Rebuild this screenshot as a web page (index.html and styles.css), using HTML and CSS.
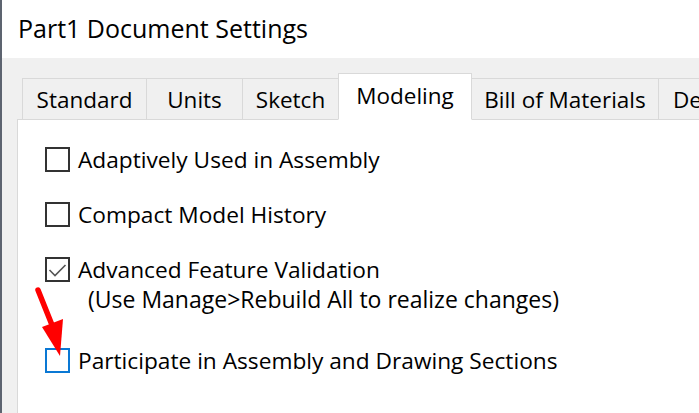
FILE: index.html
```html
<!DOCTYPE html>
<html>
<head>
<meta charset="utf-8">
<link rel="stylesheet" href="styles.css">
</head>
<body>
<div class="window">
  <div class="title">Part1 Document Settings</div>
  <div class="body">
    <div class="tabs">
      <div class="tab tab-standard">Standard</div>
      <div class="tab tab-units">Units</div>
      <div class="tab tab-sketch">Sketch</div>
      <div class="tab tab-active tab-modeling">Modeling</div>
      <div class="tab tab-bom">Bill of Materials</div>
      <div class="tab tab-de">De</div>
    </div>
    <div class="panel">
      <div class="opt">
        <span class="box"></span>
        <span class="label">Adaptively Used in Assembly</span>
      </div>
      <div class="opt">
        <span class="box"></span>
        <span class="label">Compact Model History</span>
      </div>
      <div class="opt opt-with-note">
        <span class="box box-checked">
          <svg viewBox="0 0 25 25" width="25" height="25"><polyline points="4.5,13 10,18.5 20.5,8" fill="none" stroke="#555" stroke-width="1.6"/></svg>
        </span>
        <span class="label">Advanced Feature Validation</span>
        <span class="note">(Use Manage&gt;Rebuild All to realize changes)</span>
      </div>
      <div class="opt">
        <span class="box box-focus"></span>
        <span class="label">Participate in Assembly and Drawing Sections</span>
      </div>
    </div>
  </div>
  <svg class="arrow" width="80" height="90" viewBox="0 0 80 90">
    <line x1="36" y1="290" x2="52" y2="330" transform="translate(0,-280)" stroke="#ff0000" stroke-width="5.5" stroke-linecap="round"/>
    <polygon points="40,327 61,319 58,356" transform="translate(0,-280)" fill="#ff0000"/>
  </svg>
</div>
</body>
</html>
```
FILE: styles.css
```css
html, body {
  margin: 0;
  padding: 0;
  background: #ffffff;
}
body {
  font-family: "Open Sans", "Noto Sans", sans-serif;
  color: #000;
  width: 699px;
  height: 413px;
  overflow: hidden;
}
.window {
  position: relative;
  height: 413px;
  border-left: 2px solid #5d6470;
  display: flex;
  flex-direction: column;
}
.title {
  height: 58px;
  box-sizing: border-box;
  padding: 14px 0 0 16px;
  font-size: 25px;
  line-height: 28px;
  background: #ffffff;
  white-space: nowrap;
}
.body {
  flex: 1;
  background: #f0f0f0;
  padding: 16px 0 0 15px;
  display: flex;
  flex-direction: column;
}
.tabs {
  display: flex;
  align-items: flex-end;
  padding-left: 5px;
  height: 46px;
  position: relative;
  z-index: 1;
  margin-bottom: -1px;
}
.tab {
  box-sizing: border-box;
  flex: none;
  height: 42px;
  border: 1px solid #d9d9d9;
  border-right: none;
  background: #f0f0f0;
  font-size: 22.5px;
  line-height: 40px;
  padding-top: 1px;
  text-align: center;
  white-space: nowrap;
  overflow: hidden;
}
.tab-standard { width: 124px; }
.tab-units { width: 96px; }
.tab-sketch { width: 96px; }
.tab-modeling { width: 134px; }
.tab-bom { width: 186px; }
.tab-de { width: 60px; text-align: left; padding-left: 14px; }
.tab-active {
  height: 47px;
  background: #ffffff;
  border: 1px solid #d9d9d9;
  border-bottom: 1px solid #ffffff;
  line-height: 44px;
  padding-top: 0;
  padding-bottom: 4px;
}
.tab-active + .tab { border-left: none; }
.panel {
  flex: 1;
  background: #ffffff;
  border-left: 1px solid #d9d9d9;
  border-top: 1px solid #d9d9d9;
  padding: 27px 0 0 27px;
}
.opt {
  display: grid;
  grid-template-columns: 25px auto;
  column-gap: 8px;
  margin-bottom: 30px;
}
.opt-with-note { margin-bottom: 32px; }
.box {
  box-sizing: border-box;
  width: 25px;
  height: 25px;
  border: 2px solid #333333;
  background: #ffffff;
  position: relative;
}
.box svg {
  position: absolute;
  left: -2px;
  top: -2px;
}
.box-focus { border-color: #0a78d4; }
.label {
  font-size: 22.7px;
  line-height: 25px;
  white-space: nowrap;
}
.note {
  grid-column: 2;
  font-size: 23px;
  line-height: 34px;
  padding-left: 10px;
  white-space: nowrap;
}
.arrow {
  position: absolute;
  left: 0;
  top: 280px;
}
```
